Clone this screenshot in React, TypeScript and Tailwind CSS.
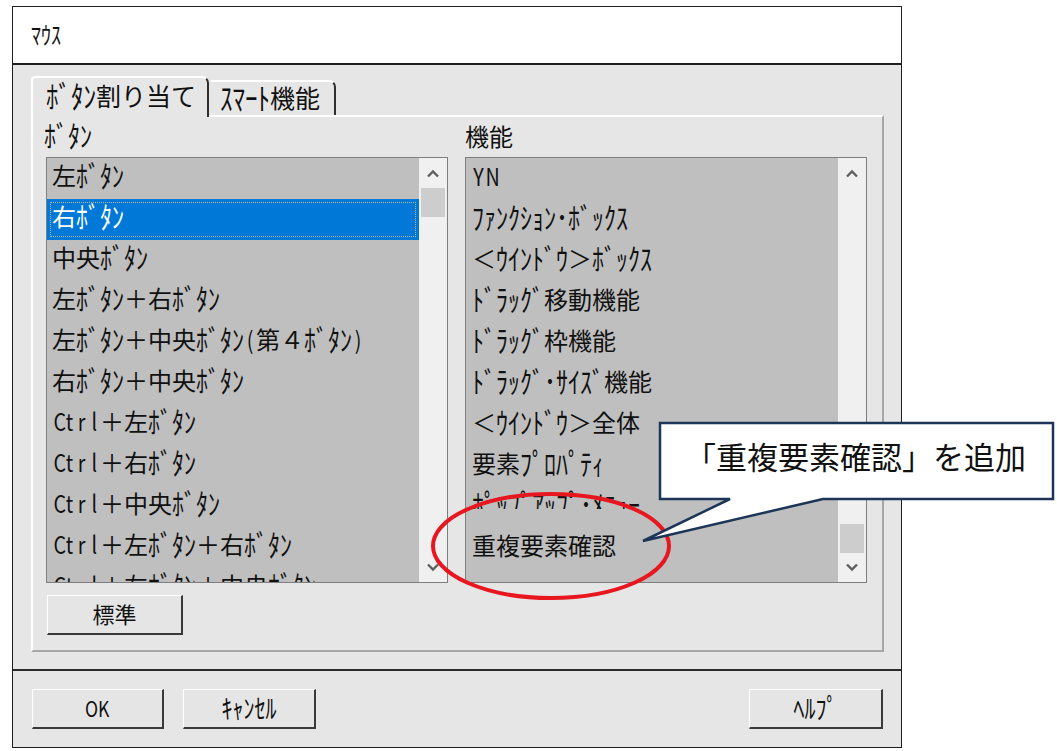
import React from "react";

const FONT = { fontFamily: '"Noto Sans CJK JP", "Noto Sans", sans-serif' };

function T({ s, latinNarrow = true }: { s: string; latinNarrow?: boolean }) {
  const parts: React.ReactNode[] = [];
  Array.from(s).forEach((c, i) => {
    const code = c.charCodeAt(0);
    if (code < 128 && c !== " ") {
      parts.push(
        <span key={i} className="inline-block w-[0.5em] text-center">
          <span className={latinNarrow ? "inline-block scale-x-[0.82]" : "inline-block"}>{c}</span>
        </span>
      );
    } else if (code >= 0xff61 && code <= 0xff9f) {
      parts.push(
        <span key={i} className="inline-block scale-y-[1.22] origin-[50%_62%]">
          {c}
        </span>
      );
    } else {
      parts.push(<span key={i}>{c}</span>);
    }
  });
  return <>{parts}</>;
}

function Chevron({ up }: { up?: boolean }) {
  return (
    <svg width="14" height="9" viewBox="0 0 14 9">
      <path
        d={up ? "M2 7.5 L7 2.5 L12 7.5" : "M2 1.5 L7 6.5 L12 1.5"}
        stroke="#5f5f5f"
        strokeWidth="2.4"
        fill="none"
      />
    </svg>
  );
}

function Scrollbar({ thumbAtBottom }: { thumbAtBottom?: boolean }) {
  return (
    <div className="w-[28px] shrink-0 bg-[#f0f0f0] flex flex-col">
      <div className="h-[30px] flex items-center justify-center">
        <Chevron up />
      </div>
      <div className={`flex-1 flex flex-col px-[2px] ${thumbAtBottom ? "justify-end" : "justify-start"}`}>
        <div className="h-[29px] bg-[#cdcdcd]" />
      </div>
      <div className="h-[29px] flex items-center justify-center">
        <Chevron />
      </div>
    </div>
  );
}

const leftItems = [
  "左ﾎﾞﾀﾝ",
  "右ﾎﾞﾀﾝ",
  "中央ﾎﾞﾀﾝ",
  "左ﾎﾞﾀﾝ＋右ﾎﾞﾀﾝ",
  "左ﾎﾞﾀﾝ＋中央ﾎﾞﾀﾝ(第４ﾎﾞﾀﾝ)",
  "右ﾎﾞﾀﾝ＋中央ﾎﾞﾀﾝ",
  "Ctrl＋左ﾎﾞﾀﾝ",
  "Ctrl＋右ﾎﾞﾀﾝ",
  "Ctrl＋中央ﾎﾞﾀﾝ",
  "Ctrl＋左ﾎﾞﾀﾝ＋右ﾎﾞﾀﾝ",
  "Ctrl＋左ﾎﾞﾀﾝ＋中央ﾎﾞﾀﾝ",
];

const rightItems = [
  "YN",
  "ﾌｧﾝｸｼｮﾝ･ﾎﾞｯｸｽ",
  "＜ｳｲﾝﾄﾞｳ＞ﾎﾞｯｸｽ",
  "ﾄﾞﾗｯｸﾞ移動機能",
  "ﾄﾞﾗｯｸﾞ枠機能",
  "ﾄﾞﾗｯｸﾞ･ｻｲｽﾞ機能",
  "＜ｳｲﾝﾄﾞｳ＞全体",
  "要素ﾌﾟﾛﾊﾟﾃｨ",
  "ﾎﾟｯﾌﾟｱｯﾌﾟ･ﾒﾆｭｰ",
  "重複要素確認",
];

function Btn({ label, w, plain }: { label: string; w: string; plain?: boolean }) {
  return (
    <div
      className={`${w} h-[40px] bg-[#e5e5e5] border-t border-l border-t-white border-l-white border-r-2 border-b-2 border-r-[#3a3a3a] border-b-[#3a3a3a] flex items-center justify-center pb-[3px] text-[22px] text-[#111] leading-none`}
    >
      {plain ? <span className="inline-block scale-x-[0.8]">{label}</span> : <T s={label} />}
    </div>
  );
}

export default function App() {
  return (
    <div className="relative w-[1057px] h-[751px] bg-white overflow-hidden text-[#111]" style={FONT}>
      <div className="ml-[12px] pt-[6px]">
        <div className="w-[890px] h-[742px] border border-[#1e1e1e] flex flex-col box-border">
          {/* title */}
          <div className="h-[58px] shrink-0 bg-white border-b-2 border-[#1e1e1e] flex items-center pl-[18px] text-[20px] leading-none">
            <T s="ﾏｳｽ" />
          </div>
          {/* main */}
          <div className="h-[606px] shrink-0 bg-[#e6e6e6] border-b-2 border-[#2a2a2a] pt-[11px] pl-[18px]">
            {/* tabs */}
            <div className="h-[39px] flex items-start">
              <div className="relative z-10 w-[178px] h-[41px] bg-[#e6e6e6] border-t-2 border-l-2 border-white border-r-2 border-r-[#2e2e2e] rounded-tl-[4px] rounded-tr-[7px] flex items-center pl-[13px] pb-[4px] text-[25px] leading-none">
                <T s="ﾎﾞﾀﾝ割り当て" />
              </div>
              <div className="mt-[4px] ml-[2px] w-[125px] h-[35px] bg-[#e6e6e6] border-t-2 border-white border-r-2 border-r-[#2e2e2e] rounded-tr-[7px] flex items-center pl-[9px] pb-[2px] text-[25px] leading-none">
                <T s="ｽﾏｰﾄ機能" />
              </div>
            </div>
            {/* panel */}
            <div className="w-[853px] h-[537px] border-t-2 border-l-2 border-white border-r-2 border-b-2 border-r-[#a6a6a6] border-b-[#a6a6a6] pl-[13px]">
              <div className="flex gap-[17px]">
                {/* left column */}
                <div className="w-[402px] flex flex-col">
                  <div className="h-[40px] flex items-center -ml-[2px] pb-[4px] text-[24px] leading-none">
                    <T s="ﾎﾞﾀﾝ" />
                  </div>
                  <div className="h-[426px] border border-[#7e7e7e] flex overflow-hidden">
                    <div className="flex-1 bg-[#bfbfbf] overflow-hidden">
                      {leftItems.map((it, i) => (
                        <div
                          key={i}
                          className={`h-[41px] shrink-0 flex items-center pl-[5px] pb-[7px] text-[24px] leading-none whitespace-nowrap ${
                            i === 1 ? "bg-[#0078d7] text-white relative" : ""
                          }`}
                        >
                          {i === 1 && (
                            <div className="absolute inset-[3px] border border-dotted border-[#c8b48c]" />
                          )}
                          <T s={it} />
                        </div>
                      ))}
                    </div>
                    <Scrollbar />
                  </div>
                  <div className="mt-[12px] ml-[1px]">
                    <Btn label="標準" w="w-[136px]" />
                  </div>
                </div>
                {/* right column */}
                <div className="w-[402px] flex flex-col">
                  <div className="h-[40px] flex items-center pb-[2px] text-[24px] leading-none">機能</div>
                  <div className="h-[426px] border border-[#7e7e7e] flex overflow-hidden">
                    <div className="flex-1 bg-[#bfbfbf] overflow-hidden">
                      {rightItems.map((it, i) => (
                        <div
                          key={i}
                          className="relative h-[41px] shrink-0 flex items-center pl-[6px] pb-[5px] text-[24px] leading-none whitespace-nowrap"
                        >
                          <T s={it} />
                          {i === 8 && <div className="absolute left-0 right-0 top-[23px] bottom-0 bg-[#bfbfbf]" />}
                        </div>
                      ))}
                    </div>
                    <Scrollbar thumbAtBottom />
                  </div>
                </div>
              </div>
            </div>
          </div>
          {/* bottom bar */}
          <div className="flex-1 bg-[#e6e6e6] pt-[18px] pl-[19px] pr-[18px] flex items-start">
            <Btn label="OK" w="w-[132px]" plain />
            <div className="ml-[19px]">
              <Btn label="ｷｬﾝｾﾙ" w="w-[133px]" />
            </div>
            <div className="ml-auto">
              <Btn label="ﾍﾙﾌﾟ" w="w-[134px]" />
            </div>
          </div>
        </div>
      </div>

      {/* annotation overlay */}
      <svg className="absolute left-0 top-0 pointer-events-none" width="1057" height="751" viewBox="0 0 1057 751">
        <ellipse cx="551" cy="546" rx="118" ry="52" fill="none" stroke="#e8161e" strokeWidth="4" />
        <path
          d="M660 423 H1053 V499 H823 L643 541 L730 499 H660 Z"
          fill="#ffffff"
          stroke="#1d3557"
          strokeWidth="2.5"
          strokeLinejoin="miter"
        />
      </svg>
      <div className="absolute left-[685px] top-[435px] text-[31px] leading-[42px] text-[#111] whitespace-nowrap">
        「重複要素確認」を追加
      </div>
    </div>
  );
}
